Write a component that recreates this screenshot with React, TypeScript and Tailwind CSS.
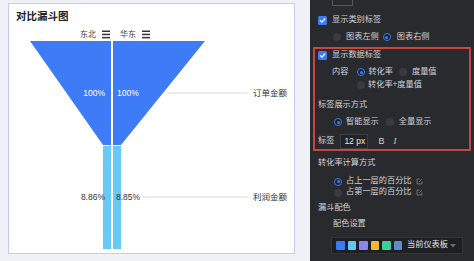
import React from "react";

const FONT = { fontFamily: '"Liberation Sans", "Noto Sans CJK SC", sans-serif' };

function Checkbox() {
  return (
    <div className="w-[9px] h-[9px] rounded-[1.5px] bg-[#3b7cf6] flex items-center justify-center shrink-0">
      <svg width="7" height="7" viewBox="0 0 10 10">
        <path d="M2 5.2 L4.2 7.3 L8.2 2.8" fill="none" stroke="white" strokeWidth="1.8" strokeLinecap="round" strokeLinejoin="round" />
      </svg>
    </div>
  );
}

function Radio({ checked }: { checked?: boolean }) {
  if (checked) {
    return (
      <div className="w-[8px] h-[8px] rounded-full border-[1.5px] border-[#3b7cf6] bg-[#1f2023] flex items-center justify-center shrink-0">
        <div className="w-[3px] h-[3px] rounded-full bg-[#3b7cf6]" />
      </div>
    );
  }
  return <div className="w-[8px] h-[8px] rounded-full bg-[#3a3b40] shrink-0" />;
}

function EditIcon() {
  return (
    <svg width="7" height="7" viewBox="0 0 10 10" className="shrink-0">
      <path d="M5 1.5 H1.5 V8.5 H8.5 V5" fill="none" stroke="#8a8c92" strokeWidth="1" />
      <path d="M4 6 L8.5 1.5" fill="none" stroke="#8a8c92" strokeWidth="1" />
    </svg>
  );
}

function Chart() {
  const txt = { fontFamily: '"Liberation Sans", "Noto Sans CJK SC", sans-serif', fontSize: 8.5 };
  return (
    <svg width="285" height="227" viewBox="0 0 285 227">
      {/* legend */}
      <text x="71" y="8" dominantBaseline="central" fill="#444" style={{ ...txt, fontSize: 8 }}>东北</text>
      <rect x="93" y="4.5" width="8" height="1.5" fill="#333" />
      <rect x="93" y="7.7" width="8" height="1.5" fill="#333" />
      <rect x="93" y="10.9" width="8" height="1.5" fill="#333" />
      <text x="111" y="8" dominantBaseline="central" fill="#444" style={{ ...txt, fontSize: 8 }}>华东</text>
      <rect x="133" y="4.5" width="8" height="1.5" fill="#333" />
      <rect x="133" y="7.7" width="8" height="1.5" fill="#333" />
      <rect x="133" y="10.9" width="8" height="1.5" fill="#333" />

      {/* funnels */}
      <polygon points="21,15 102,15 102,119 94,119" fill="#3d7bf7" />
      <polygon points="104,15 196,15 112,119 104,119" fill="#3d7bf7" />
      <rect x="94" y="120" width="8" height="103" fill="#67c9f6" />
      <rect x="104" y="120" width="8" height="103" fill="#67c9f6" />

      {/* labels */}
      <text x="96" y="67" textAnchor="end" dominantBaseline="central" fill="#ffffff" style={txt}>100%</text>
      <text x="108" y="67" dominantBaseline="central" fill="#ffffff" style={txt}>100%</text>
      <line x1="158" y1="67" x2="239" y2="67" stroke="#d9dce3" strokeWidth="1" />
      <text x="278" y="67" textAnchor="end" dominantBaseline="central" fill="#333" style={txt}>订单金额</text>

      <text x="96" y="171" textAnchor="end" dominantBaseline="central" fill="#333" style={txt}>8.86%</text>
      <text x="107" y="171" dominantBaseline="central" fill="#333" style={txt}>8.85%</text>
      <line x1="133" y1="171" x2="239" y2="171" stroke="#d9dce3" strokeWidth="1" />
      <text x="278" y="171" textAnchor="end" dominantBaseline="central" fill="#333" style={txt}>利润金额</text>
    </svg>
  );
}

export default function App() {
  const colors = ["#3a7af5", "#5fc6f5", "#8e82f5", "#f7b731", "#3dcf9b", "#5f8acb"];
  return (
    <div className="flex w-[474px] h-[261px] overflow-hidden" style={FONT}>
      {/* canvas */}
      <div className="w-[310px] h-full bg-[#eff1f6] pt-[3px] pl-[8px] pr-[15px] pb-[7px] flex">
        <div className="flex-1 border border-[#c2cdf3] bg-white flex flex-col">
          <div className="h-[22px] pl-[7px] pt-[6px] text-[10.5px] font-bold text-[#222] leading-[13px]">对比漏斗图</div>
          <Chart />
        </div>
      </div>

      {/* settings panel */}
      <div className="w-[164px] h-full bg-[#292a2e] flex flex-col text-[8.2px] text-[#d0d2d6] leading-none whitespace-nowrap">
        <div className="ml-[22px] w-[21px] h-[6px] border border-t-0 border-[#55575c]" />

        <div className="mt-[8px] h-[12px] pl-[8px] flex items-center gap-[5px]">
          <Checkbox />
          <span>显示类别标签</span>
        </div>
        <div className="mt-[5px] h-[12px] pl-[23px] flex items-center">
          <Radio />
          <span className="ml-[5px]">图表左侧</span>
          <span className="ml-[4px]"><Radio checked /></span>
          <span className="ml-[6px]">图表右侧</span>
        </div>

        {/* highlighted box */}
        <div className="mt-[4px] ml-[3px] w-[158px] h-[104px] border-2 border-[#c8463f] flex flex-col pl-[3px]">
          <div className="h-[12px] flex items-center gap-[5px]">
            <Checkbox />
            <span>显示数据标签</span>
          </div>
          <div className="mt-[5px] h-[12px] pl-[14px] flex items-center">
            <span>内容</span>
            <span className="ml-[9px]"><Radio checked /></span>
            <span className="ml-[3px]">转化率</span>
            <span className="ml-[6px]"><Radio /></span>
            <span className="ml-[5px]">度量值</span>
          </div>
          <div className="mt-[1px] h-[12px] pl-[39px] flex items-center">
            <Radio />
            <span className="ml-[3px]">转化率+度量值</span>
          </div>
          <div className="mt-[8px] h-[12px] flex items-center">
            <span>标签展示方式</span>
          </div>
          <div className="mt-[5px] h-[12px] pl-[16px] flex items-center">
            <Radio checked />
            <span className="ml-[4px]">智能显示</span>
            <span className="ml-[7px]"><Radio /></span>
            <span className="ml-[5px]">全量显示</span>
          </div>
          <div className="mt-[6px] h-[15px] flex items-center">
            <span>标签</span>
            <div className="ml-[6px] w-[28px] h-[15px] border border-[#3d3e44] bg-[#222327] flex items-center pl-[3px] text-[8.5px] text-[#e2e3e6]">
              12 px
            </div>
            <span className="ml-[10px] text-[9px]">B</span>
            <span className="ml-[9px] text-[9px] italic" style={{ fontFamily: '"Liberation Serif", serif' }}>I</span>
          </div>
        </div>

        <div className="mt-[6px] h-[12px] pl-[8px] flex items-center">
          <span>转化率计算方式</span>
        </div>
        <div className="mt-[7px] h-[11px] pl-[24px] flex items-center">
          <Radio checked />
          <span className="ml-[4px]">占上一层的百分比</span>
          <span className="ml-[4px]"><EditIcon /></span>
        </div>
        <div className="h-[11px] pl-[24px] flex items-center">
          <Radio />
          <span className="ml-[4px]">占第一层的百分比</span>
          <span className="ml-[4px]"><EditIcon /></span>
        </div>
        <div className="mt-[4px] h-[12px] pl-[8px] flex items-center">
          <span>漏斗配色</span>
        </div>
        <div className="mt-[4px] h-[12px] pl-[23px] flex items-center">
          <span>配色设置</span>
        </div>
        <div className="mt-[7px] ml-[21px] w-[132px] h-[17px] bg-[#1e1f22] border border-[#34353a] flex items-center pl-[4px]">
          <div className="flex items-center gap-[3px] shrink-0">
            {colors.map((c) => (
              <div key={c} className="w-[8.5px] h-[8.5px] rounded-[1px]" style={{ backgroundColor: c }} />
            ))}
          </div>
          <span className="ml-[5px] text-[#e2e3e6]">当前仪表板</span>
          <svg width="6" height="4" viewBox="0 0 6 4" className="ml-auto mr-[6px] shrink-0">
            <path d="M0 0 L6 0 L3 3.5 Z" fill="#6b6d73" />
          </svg>
        </div>
      </div>
    </div>
  );
}
